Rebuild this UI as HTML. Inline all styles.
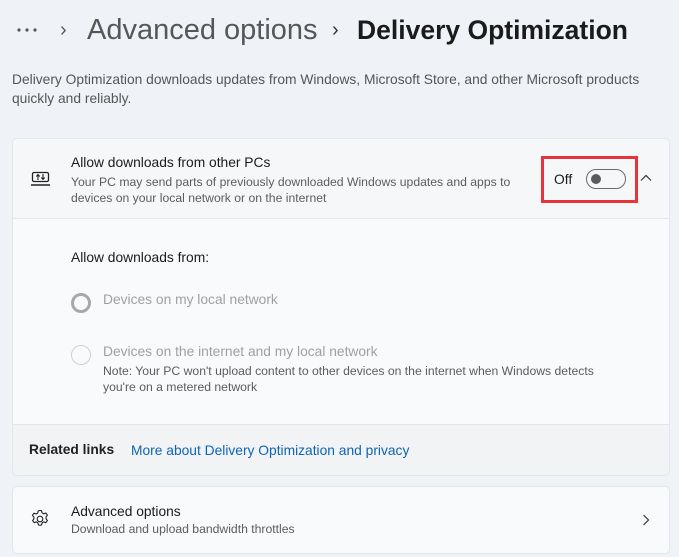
<!DOCTYPE html>
<html><head><style>
*{box-sizing:border-box;margin:0;padding:0}
body{width:679px;height:557px;background:#eff3f8;font-family:"Liberation Sans",sans-serif;color:#1b1b1b;position:relative;overflow:hidden}
.a{position:absolute;white-space:nowrap}
.card{position:absolute;left:12px;width:658px;border:1px solid #e3e6ea;border-radius:5px;background:#f9fafc}
</style></head><body>
<svg class="a" style="left:16px;top:27px" width="24" height="6"><circle cx="3" cy="3" r="1.6" fill="#555"/><circle cx="11" cy="3" r="1.6" fill="#555"/><circle cx="19" cy="3" r="1.6" fill="#555"/></svg>
<div class="a" style="left:60px;top:19px;font-size:20px;color:#5c5c5c">›</div>
<div class="a" style="left:87px;top:14px;font-size:29px;color:#575757">Advanced options</div>
<div class="a" style="left:332px;top:19px;font-size:20px;color:#333">›</div>
<div class="a" style="left:357px;top:15px;font-size:26.5px;font-weight:bold;color:#1b1b1b">Delivery Optimization</div>
<div class="a" style="left:12px;top:70px;font-size:13.8px;color:#555;line-height:19px">Delivery Optimization downloads updates from Windows, Microsoft Store, and other Microsoft products<br>quickly and reliably.</div>

<div class="card" style="top:138px;height:338px;overflow:hidden">
 <div style="position:absolute;left:0;top:0;width:100%;height:80px;background:#f6f7f9;border-bottom:1px solid #e3e6ea"></div>
 <div style="position:absolute;left:0;top:285px;width:100%;height:53px;background:#f1f3f5;border-top:1px solid #e3e6ea"></div>
</div>
<svg class="a" style="left:30px;top:171px" width="22" height="16" viewBox="0 0 22 16"><rect x="2.5" y="1.5" width="16" height="9" rx="1.5" fill="none" stroke="#222" stroke-width="1.3"/><path d="M1 14H20" stroke="#222" stroke-width="1.5"/><path d="M8 9V4M6.3 5.5L8 3.6 9.7 5.5M13 3v5M11.3 6.5L13 8.4 14.7 6.5" stroke="#222" stroke-width="1.1" fill="none"/></svg>
<div class="a" style="left:71px;top:155px;font-size:13.8px">Allow downloads from other PCs</div>
<div class="a" style="left:71px;top:174px;font-size:12.2px;color:#5c5c5c;line-height:16px">Your PC may send parts of previously downloaded Windows updates and apps to<br>devices on your local network or on the internet</div>
<div class="a" style="left:541px;top:156px;width:97px;height:47px;border:3px solid #e8333a"></div>
<div class="a" style="left:554px;top:172px;font-size:13.8px">Off</div>
<div class="a" style="left:586px;top:169px;width:40px;height:20px;border:1px solid #6b6b6b;border-radius:10px;background:#f6f7f9"></div>
<div class="a" style="left:591px;top:174px;width:10px;height:10px;border-radius:5px;background:#5b5b5b"></div>
<svg class="a" style="left:640px;top:174px" width="12" height="8"><path d="M1 6.5L6 1.5 11 6.5" fill="none" stroke="#333" stroke-width="1.2"/></svg>

<div class="a" style="left:71px;top:250px;font-size:13.8px">Allow downloads from:</div>
<div class="a" style="left:71px;top:293px;width:20px;height:20px;border-radius:10px;border:3px solid #a8a8a8"></div>
<div class="a" style="left:103px;top:292px;font-size:13.8px;color:#a0a0a0">Devices on my local network</div>
<div class="a" style="left:71px;top:345px;width:20px;height:20px;border-radius:10px;border:1px solid #cfcfcf"></div>
<div class="a" style="left:103px;top:344px;font-size:13.8px;color:#a0a0a0">Devices on the internet and my local network</div>
<div class="a" style="left:103px;top:363px;font-size:12.2px;color:#5c5c5c;line-height:16px">Note: Your PC won't upload content to other devices on the internet when Windows detects<br>you're on a metered network</div>

<div class="a" style="left:29px;top:442px;font-size:13.8px;font-weight:bold;color:#222">Related links</div>
<div class="a" style="left:131px;top:443px;font-size:13.8px;color:#0f64b5">More about Delivery Optimization and privacy</div>

<div class="card" style="top:486px;height:68px"></div>
<svg class="a" style="left:30px;top:509px" width="20" height="20" viewBox="0 0 20 20"><path d="M10 1.5l1.6.2.5 2.2 1.6.9 2.1-.8 1.6 2.1-1.3 1.8v1.9l1.3 1.8-1.6 2.1-2.1-.8-1.6.9-.5 2.2-1.6.2-1.6-.2-.5-2.2-1.6-.9-2.1.8-1.6-2.1 1.3-1.8V8.1L2.4 6.3 4 4.2l2.1.8 1.6-.9.5-2.2z" fill="none" stroke="#222" stroke-width="1.1" stroke-linejoin="round"/><circle cx="10" cy="10" r="2.8" fill="none" stroke="#222" stroke-width="1.1"/></svg>
<div class="a" style="left:71px;top:504px;font-size:13.8px">Advanced options</div>
<div class="a" style="left:71px;top:522px;font-size:12.2px;color:#5c5c5c">Download and upload bandwidth throttles</div>
<svg class="a" style="left:642px;top:514px" width="8" height="12"><path d="M1.5 1L6.5 6 1.5 11" fill="none" stroke="#333" stroke-width="1.2"/></svg>
</body></html>
